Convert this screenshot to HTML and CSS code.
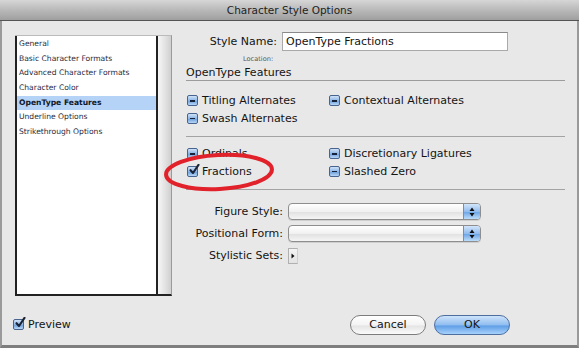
FILE: index.html
```html
<!DOCTYPE html>
<html>
<head>
<meta charset="utf-8">
<link rel="stylesheet" href="styles.css">
</head>
<body>
<div class="window">
  <div class="titlebar">Character Style Options</div>
  <div class="main">
    <div class="listbox">
      <ul class="list">
        <li>General</li>
        <li>Basic Character Formats</li>
        <li>Advanced Character Formats</li>
        <li>Character Color</li>
        <li class="sel">OpenType Features</li>
        <li>Underline Options</li>
        <li>Strikethrough Options</li>
      </ul>
      <div class="scroll"></div>
    </div>
    <div class="panel">
      <div class="namerow">
        <span class="lbl">Style Name:</span>
        <div class="input">OpenType Fractions</div>
      </div>
      <div class="location">Location:</div>
      <div class="heading">OpenType Features</div>
      <div class="group g1">
        <label class="opt"><span class="cb mixed"></span>Titling Alternates</label>
        <label class="opt"><span class="cb mixed"></span>Contextual Alternates</label>
        <label class="opt"><span class="cb mixed"></span>Swash Alternates</label>
      </div>
      <div class="group g2">
        <label class="opt"><span class="cb mixed"></span>Ordinals</label>
        <label class="opt"><span class="cb mixed"></span>Discretionary Ligatures</label>
        <label class="opt"><span class="cb checked"><svg viewBox="0 0 12 12" width="12" height="12"><path d="M2.5 6.2 L5 9 L10.5 0.8" fill="none" stroke="#1a2436" stroke-width="2.1" stroke-linecap="round" stroke-linejoin="round"/></svg></span>Fractions</label>
        <label class="opt"><span class="cb mixed"></span>Slashed Zero</label>
      </div>
      <div class="form">
        <div class="frow"><span class="flbl">Figure Style:</span><div class="select"><span class="arrows"><svg viewBox="0 0 8 12" width="8" height="12"><path d="M4 1.5 L6.5 5 L1.5 5Z M4 10.5 L6.5 7 L1.5 7Z" fill="#111"/></svg></span></div></div>
        <div class="frow"><span class="flbl">Positional Form:</span><div class="select"><span class="arrows"><svg viewBox="0 0 8 12" width="8" height="12"><path d="M4 1.5 L6.5 5 L1.5 5Z M4 10.5 L6.5 7 L1.5 7Z" fill="#111"/></svg></span></div></div>
        <div class="frow"><span class="flbl">Stylistic Sets:</span><div class="disclose"><svg viewBox="0 0 6 8" width="6" height="8"><path d="M1.5 1.5 L4.5 4 L1.5 6.5Z" fill="#111"/></svg></div></div>
      </div>
    </div>
  </div>
  <div class="footer">
    <label class="preview"><span class="cb checked"><svg viewBox="0 0 12 12" width="12" height="12"><path d="M2.5 6.2 L5 9 L10.5 0.8" fill="none" stroke="#1a2436" stroke-width="2.1" stroke-linecap="round" stroke-linejoin="round"/></svg></span>Preview</label>
    <div class="buttons">
      <div class="btn cancel">Cancel</div>
      <div class="btn ok">OK</div>
    </div>
  </div>
  <svg class="ring" viewBox="0 0 124 52" width="124" height="52"><ellipse cx="62" cy="26" rx="53" ry="17" transform="rotate(-3 62 26)" fill="none" stroke="#e1222a" stroke-width="4"/></svg>
</div>
</body>
</html>
```

FILE: styles.css
```css
* { box-sizing: border-box; }
html, body { margin: 0; padding: 0; }
body {
  width: 579px;
  height: 348px;
  overflow: hidden;
  font-family: "DejaVu Sans", "Liberation Sans", sans-serif;
  color: #141414;
  background: #e8e8e8;
}
.window {
  position: relative;
  width: 579px;
  height: 348px;
  background: #e8e8e8;
  border-left: 2px solid #9a9a9a;
  border-right: 2px solid #9a9a9a;
  border-bottom: 3px solid #7e7e7e;
  display: flex;
  flex-direction: column;
}
.titlebar {
  height: 21px;
  margin: 0 -2px;
  background: linear-gradient(#d6d6d6, #b9b9b9 50%, #9f9f9f);
  border-bottom: 1px solid #545454;
  text-align: center;
  font-size: 10.5px;
  line-height: 20px;
  color: #1e1e1e;
}
.main {
  display: flex;
  align-items: flex-start;
  padding: 11px 0 0 13px;
  height: 275px;
}
.listbox {
  margin-top: 3px;
  width: 157px;
  height: 261px;
  display: flex;
  border-bottom: 2px solid #222;
  border-right: 1px solid #9a9a9a;
  border-top: 1px solid #bbb;
}
.list {
  list-style: none;
  margin: 0;
  padding: 1px 0 0;
  width: 143px;
  background: #fff;
  border-left: 2px solid #222;
  border-right: 2px solid #222;
  font-size: 7.6px;
  color: #2a2a3a;
}
.list li {
  height: 14.7px;
  line-height: 14.7px;
  padding-left: 2px;
}
.list li.sel {
  background: #b5d2f7;
  font-weight: bold;
  color: #10182a;
}
.scroll {
  flex: 1;
  background: linear-gradient(90deg, #f6f6f6, #e0e0e0 60%, #cfcfcf);
}
.panel {
  margin-left: 14px;
  width: 379px;
  display: flex;
  flex-direction: column;
}
.namerow {
  display: flex;
  align-items: center;
  height: 19px;
}
.lbl {
  width: 92px;
  text-align: right;
  font-size: 11px;
  padding-right: 1px;
}
.input {
  margin-left: 4px;
  width: 226px;
  height: 19px;
  background: #fff;
  border: 1px solid #a9a9a9;
  border-top-color: #8a8a8a;
  font-size: 11px;
  line-height: 17px;
  padding-left: 3px;
}
.location {
  margin-top: 3px;
  padding-left: 57px;
  font-size: 6.6px;
  line-height: 10px;
  color: #555;
}
.heading {
  margin-top: 2px;
  font-size: 11px;
  line-height: 14px;
  height: 15px;
  border-bottom: 1px solid #9c9c9c;
}
.group {
  display: grid;
  grid-template-columns: 142px 1fr;
  grid-auto-rows: 17.5px;
  border-bottom: 1px solid #a3a3a3;
}
.g1 { padding: 11px 0 9px; }
.g2 { padding: 8px 0 9px; }
.opt {
  display: flex;
  align-items: center;
  font-size: 11px;
  padding-left: 1px;
}
.cb {
  position: relative;
  width: 11px;
  height: 11px;
  margin-right: 4px;
  border: 1px solid #47648f;
  border-radius: 2px;
  background: linear-gradient(#cfe1f7, #8db6e8 50%, #6a9fdd 55%, #b9d6f6);
  flex: none;
}
.cb.mixed::after {
  content: "";
  position: absolute;
  left: 2px;
  right: 2px;
  top: 4px;
  height: 1.6px;
  background: #17233b;
}
.cb svg {
  position: absolute;
  left: 0;
  top: -3px;
}
.form {
  margin-top: 13px;
  display: flex;
  flex-direction: column;
  gap: 5px;
}
.frow {
  display: flex;
  align-items: center;
  height: 17px;
}
.flbl {
  width: 102px;
  text-align: right;
  font-size: 11px;
  padding-right: 5px;
}
.select {
  position: relative;
  width: 193px;
  height: 17px;
  border: 1px solid #8e8e8e;
  border-radius: 4px;
  background: linear-gradient(#ffffff, #f1f1f1 50%, #e2e2e2 55%, #f5f5f5);
  box-shadow: 0 1px 0 #cfcfcf;
  overflow: hidden;
}
.arrows {
  position: absolute;
  right: 0;
  top: 0;
  bottom: 0;
  width: 17px;
  border-left: 1px solid #6f8fbd;
  background: linear-gradient(#d3e5fa, #92bcee 50%, #6ea6e6 55%, #bcdcfb);
  display: flex;
  align-items: center;
  justify-content: center;
}
.disclose {
  width: 10px;
  height: 16px;
  border: 1px solid #b0b0b0;
  border-right-color: #d0d0d0;
  background: linear-gradient(#f4f4f4, #e3e3e3);
  display: flex;
  align-items: center;
  justify-content: center;
}
.footer {
  flex: 1;
  display: flex;
  align-items: flex-start;
  justify-content: space-between;
  padding: 19px 67px 0 11px;
}
.preview {
  display: flex;
  align-items: center;
  font-size: 11px;
  margin-top: 3px;
}
.buttons {
  display: flex;
  gap: 8px;
}
.btn {
  width: 76px;
  height: 20px;
  border-radius: 10px;
  text-align: center;
  font-size: 11px;
  line-height: 18px;
}
.cancel {
  border: 1px solid #7c7c7c;
  background: linear-gradient(#ffffff, #f3f3f3 50%, #e4e4e4 55%, #fbfbfb);
}
.ok {
  border: 1px solid #4d6fa0;
  background: linear-gradient(#cfe3fa, #8fbdf0 50%, #5f9ee6 55%, #a7d1fb);
}
.ring {
  position: absolute;
  left: 155px;
  top: 146px;
}
```
